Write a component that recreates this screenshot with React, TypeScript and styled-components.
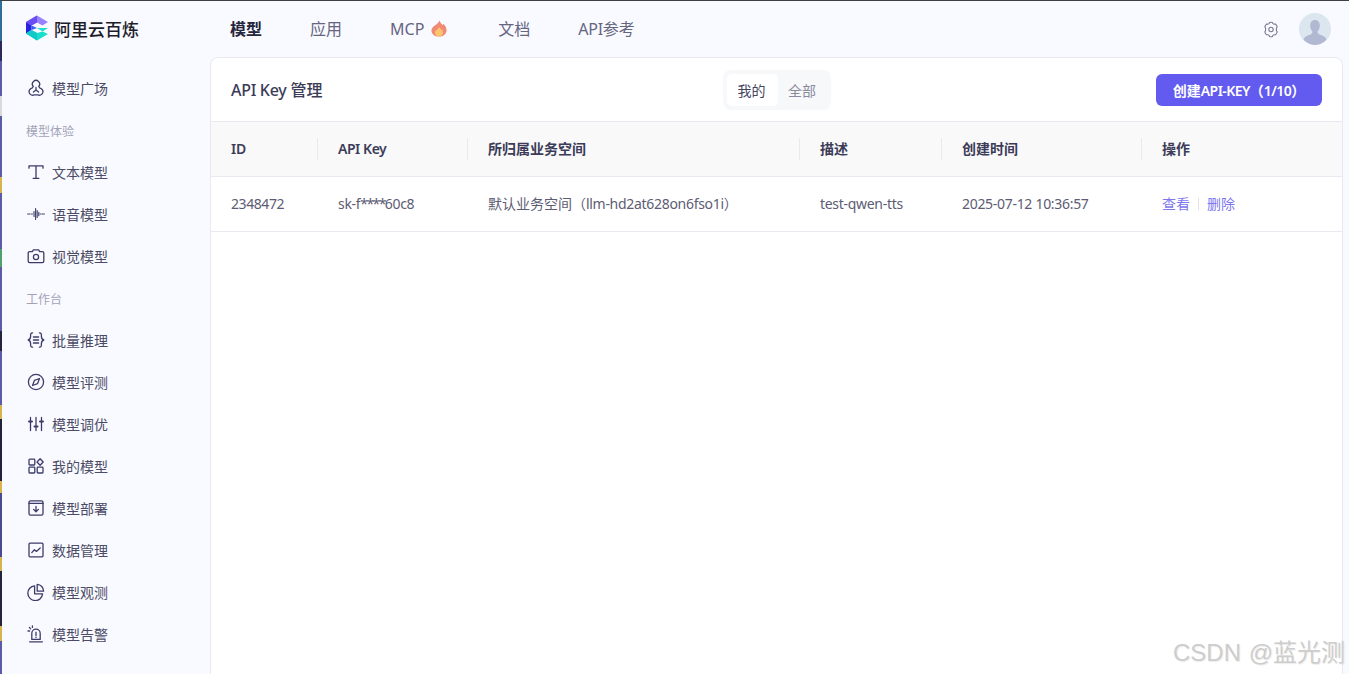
import React from "react";
import styled, { createGlobalStyle } from "styled-components";

const FONT = `"Noto Sans", "Noto Sans CJK SC", sans-serif`;

const Global = createGlobalStyle`
  html, body { margin: 0; padding: 0; height: 100%; overflow: hidden; background: #f9faff; }
  * { box-sizing: border-box; }
  #root { height: 100%; }
`;

const Shell = styled.div`
  position: relative;
  display: flex;
  height: 674px;
  overflow: hidden;
  border-top: 1px solid #3f4043;
  background: #f9faff;
  font-family: ${FONT};
  color: #45455f;
`;

const DesktopSliver = styled.div`
  flex: 0 0 2px;
  background: linear-gradient(
    180deg,
    #2b6f9a 0 40px, #2a2a55 40px 60px, #5b5ca8 60px 95px, #d9d9d9 95px 115px, #5b5ca8 115px 176px,
    #d9b44a 176px 192px, #5b5ca8 192px 248px, #4fa06a 248px 266px, #5b5ca8 266px 330px,
    #24243c 330px 350px, #5b5ca8 350px 404px, #d9b44a 404px 418px, #22223a 418px 480px,
    #d9b44a 480px 492px, #4a4a90 492px 556px, #d9b44a 556px 570px, #24243c 570px 625px, #d9b44a 625px 640px, #5b5ca8 640px
  );
`;

const Sidebar = styled.aside`
  flex: 0 0 208px;
  display: flex;
  flex-direction: column;
`;

const Brand = styled.div`
  height: 56px;
  display: flex;
  align-items: center;
  gap: 5px;
  padding: 0 0 2px 23px;
  font-size: 17px;
  font-weight: 500;
  color: #1d1d2b;
`;

const SideNav = styled.nav`
  display: flex;
  flex-direction: column;
  padding-top: 10px;
`;

const SideLabel = styled.div`
  height: 42px;
  padding: 2px 0 0 24px;
  display: flex;
  align-items: center;
  font-size: 12px;
  color: #a3a3b8;
`;

const SideItem = styled.a`
  height: 42px;
  padding-left: 25px;
  display: flex;
  align-items: center;
  gap: 7px;
  font-size: 14px;
  color: #4b4b66;
  svg {
    flex: none;
    width: 18px;
    height: 18px;
    fill: none;
    stroke: #3c3c68;
    stroke-width: 1.3;
    stroke-linecap: round;
    stroke-linejoin: round;
  }
`;

const Main = styled.div`
  flex: 1;
  min-width: 0;
  display: flex;
  flex-direction: column;
  padding-right: 6px;
`;

const TopBar = styled.header`
  height: 56px;
  flex: none;
  display: flex;
  align-items: center;
  padding: 0 11px 2px 20px;
  gap: 48px;
  margin-right: -6px;
`;

const TopLink = styled.a<{ $active?: boolean }>`
  display: flex;
  align-items: center;
  gap: 7px;
  font-size: 16px;
  font-weight: ${(p) => (p.$active ? 600 : 400)};
  color: ${(p) => (p.$active ? "#26263c" : "#65657f")};
`;

const McpLabel = styled.span`
  padding-top: 2px;
`;

const TopTools = styled.div`
  margin-left: auto;
  display: flex;
  align-items: center;
  gap: 20px;
  padding: 2px 7px 0 0;
`;

const Avatar = styled.div`
  width: 32px;
  height: 32px;
  border-radius: 50%;
  overflow: hidden;
  background: #dbe6ee;
`;

const Card = styled.section`
  flex: 1;
  background: #fff;
  border: 1px solid #e9eaf0;
  border-bottom: none;
  border-radius: 8px 8px 0 0;
`;

const CardHead = styled.div`
  height: 63px;
  position: relative;
  display: flex;
  align-items: center;
  justify-content: space-between;
  padding: 0 20px;
`;

const CardTitle = styled.h1`
  margin: 0 0 1px;
  font-size: 16px;
  font-weight: 500;
  color: #3c3c58;
`;

const Segments = styled.div`
  position: absolute;
  left: 512px;
  top: 12px;
  width: 108px;
  height: 40px;
  padding: 4px;
  display: flex;
  border-radius: 8px;
  background: #f7f8fa;
`;

const Segment = styled.div<{ $on?: boolean }>`
  width: ${(p) => (p.$on ? 51 : 48)}px;
  padding-right: ${(p) => (p.$on ? 2 : 0)}px;
  display: flex;
  align-items: center;
  justify-content: center;
  border-radius: 5px;
  font-size: 14px;
  background: ${(p) => (p.$on ? "#fff" : "transparent")};
  color: ${(p) => (p.$on ? "#45455f" : "#8a8a9c")};
`;

const PrimaryButton = styled.button`
  align-self: flex-start;
  margin-top: 16px;
  width: 166px;
  height: 32px;
  border: none;
  border-radius: 6px;
  background: #635bef;
  color: #fff;
  font-family: ${FONT};
  font-size: 14px;
  font-weight: 600;
  white-space: nowrap;
  padding: 0;
`;

const Latin = styled.span<{ $ls?: number }>`
  letter-spacing: ${(p) => p.$ls ?? -0.3}px;
`;

const Row = styled.div<{ $head?: boolean }>`
  display: grid;
  grid-template-columns: 107px 150px 332px 142px 200px 1fr;
  height: 55px;
  align-items: center;
  border-top: 1px solid #e9eaf0;
  background: ${(p) => (p.$head ? "#f9f9fa" : "#fff")};
  font-size: 14px;
  font-weight: ${(p) => (p.$head ? 600 : 400)};
  color: ${(p) => (p.$head ? "#3c3c58" : "#5c5c74")};
`;

const RowEnd = styled.div`
  border-top: 1px solid #e9eaf0;
`;

const Cell = styled.div`
  padding-left: 20px;
  height: 22px;
  line-height: 22px;
  white-space: nowrap;
`;

const HeadCell = styled(Cell)<{ $first?: boolean }>`
  position: relative;
  &::before {
    content: "";
    display: ${(p) => (p.$first ? "none" : "block")};
    position: absolute;
    left: -1px;
    top: 0;
    width: 1px;
    height: 22px;
    background: #e9eaf0;
  }
`;

const Action = styled.a`
  color: #7d77ee;
`;

const ActionSep = styled.span`
  display: inline-block;
  width: 1px;
  height: 12px;
  margin: 0 8px;
  vertical-align: -1px;
  background: #e2e3ea;
`;

const Watermark = styled.div`
  position: absolute;
  right: 4px;
  bottom: 6px;
  font-family: "Liberation Sans", "Noto Sans CJK SC", sans-serif;
  font-size: 24px;
  line-height: 30px;
  word-spacing: 1px;
  white-space: nowrap;
  color: #cdcdcd;
  text-shadow: 1px 1px 1px rgba(0, 0, 0, 0.08);
  pointer-events: none;
`;

const LogoMark = () => (
  <svg width="24" height="26" viewBox="0 0 24 26" aria-hidden="true">
    <polygon points="1,7 12,0.5 23,7 17.5,10.5 12,7.5 6.5,10.5" fill="#9a82ff" />
    <polygon points="1,7 12,0.5 12,7.5 6.5,10.5" fill="#6c4cf5" />
    <polygon points="1,7 6.5,10.5 6.5,15 1,18.5" fill="#2424e0" />
    <polygon points="6.5,10.5 12,13 6.5,15" fill="#3a5cf0" />
    <polygon points="12,13 23,13 17.5,16.5" fill="#1fe0d0" />
    <polygon points="1,18.5 6.5,15 12,18 17.5,16.5 23,19 12,25.5" fill="#18dfcc" />
    <polygon points="1,18.5 6.5,15 12,18 12,25.5" fill="#12c8c8" />
  </svg>
);

const FlameMark = styled.svg`
  margin-right: 3px;
`;

const Flame = () => (
  <FlameMark width="16" height="17" viewBox="0 0 14 17" preserveAspectRatio="none" aria-hidden="true">
    <path d="M7.5 0.5C8 3 9.5 3.5 10 5.2 10.6 4.8 10.8 4.2 10.8 3.8 12.6 5.6 13.6 7.8 13.6 10.2 13.6 14 10.8 16.6 7 16.6S0.4 14 0.4 10.4C0.4 6.4 6 4.6 7.5 0.5Z" fill="#f08a72" />
    <path d="M7.2 7C7.6 8.8 10.6 9.8 10.6 12.6 10.6 15 9 16.4 7 16.4S3.4 15 3.4 12.8C3.4 10.4 6.4 9.4 7.2 7Z" fill="#fdc46e" />
  </FlameMark>
);

const Gear = () => (
  <svg width="16" height="17" viewBox="0 0 16 17" fill="none" stroke="#7a7a92" strokeWidth="1.1" strokeLinejoin="round" aria-hidden="true">
    <path d="M6.6 1.6 C7.5 1.1 8.5 1.1 9.4 1.6 L9.9 2.6 C10.4 2.9 10.9 3.1 11.4 3.1 L12.6 3.1 C13.4 4 13.9 5 14.2 6 L13.5 7 C13.4 7.7 13.4 8.9 13.5 9.8 L14.2 10.9 C13.9 12 13.4 13 12.6 13.7 L11.4 13.8 C10.9 13.9 10.4 14.1 9.9 14.4 L9.4 15.4 C8.5 15.9 7.5 15.9 6.6 15.4 L6.1 14.4 C5.6 14.1 5.1 13.9 4.6 13.8 L3.4 13.7 C2.6 13 2.1 12 1.8 10.9 L2.5 9.8 C2.6 8.9 2.6 7.7 2.5 7 L1.8 6 C2.1 5 2.6 4 3.4 3.1 L4.6 3.1 C5.1 3.1 5.6 2.9 6.1 2.6 Z" />
    <circle cx="8" cy="8.5" r="2.2" />
  </svg>
);

const Person = () => (
  <svg width="32" height="32" viewBox="0 0 32 32" aria-hidden="true">
    <path d="M16 7C19 7 20.8 9.4 20.8 12.6 20.8 15.4 19.6 17.4 18.6 18.6 18.4 20 19 20.8 20.4 21.4 23.4 22.6 26.6 23.4 27.5 26.5 25 30 20.5 32 16 32 11.5 32 7 30 4.5 26.5 5.4 23.4 8.6 22.6 11.6 21.4 13 20.8 13.6 20 13.4 18.6 12.4 17.4 11.2 15.4 11.2 12.6 11.2 9.4 13 7 16 7Z" fill="#b1b8d2" />
  </svg>
);

const icons: Record<string, React.ReactNode> = {
  square: (
    <>
      <path d="M6.3 7.4A3.6 3.6 0 1 1 11.7 7.4L13 9.1A3.6 3.6 0 1 1 10.6 15.8H7.4A3.6 3.6 0 1 1 5 9.1Z" />
      <path d="M9 8.4V11M9 11L6.4 13M9 11L11.6 13" />
    </>
  ),
  text: <path d="M2 5.2V2.8h14v2.4M9 2.8v12.6M6.2 15.4h5.6" />,
  wave: <path d="M0.6 9h2.4M4.4 9h1M7 6.6v4.8M8.6 3.6v10.8M10.2 5.6v6.8M11.8 7.2v3.6M13.2 9h.8M15.2 9h2.2" strokeWidth="1.1" />,
  camera: (
    <>
      <path d="M2.6 4.6H5.4L6.4 2.8H11.6L12.6 4.6H15.4A1.4 1.4 0 0 1 16.8 6V14.2A1.4 1.4 0 0 1 15.4 15.6H2.6A1.4 1.4 0 0 1 1.2 14.2V6A1.4 1.4 0 0 1 2.6 4.6Z" />
      <circle cx="9" cy="10" r="2.6" />
    </>
  ),
  batch: (
    <path d="M5.6 1.8C3.4 1.8 3.6 3.4 3.6 5.2 3.6 7.2 3.4 8.4 1.2 9 3.4 9.6 3.6 10.8 3.6 12.8 3.6 14.6 3.4 16.2 5.6 16.2M12.4 1.8C14.6 1.8 14.4 3.4 14.4 5.2 14.4 7.2 14.6 8.4 16.8 9 14.6 9.6 14.4 10.8 14.4 12.8 14.4 14.6 14.6 16.2 12.4 16.2M6.4 6h5.2M6.4 9h5.2M6.4 12h5.2" />
  ),
  compass: (
    <>
      <circle cx="9" cy="9" r="7.6" />
      <path d="M12.5 5.5L10.6 10.6 5.5 12.5 7.4 7.4Z" />
    </>
  ),
  tune: (
    <>
      <path d="M3.5 2.5V15.5M9 2.5V15.5M14.5 2.5V15.5" />
      <path d="M2 6.5h3M7.5 11.5h3M13 6.5h3" strokeWidth="2" />
    </>
  ),
  mine: (
    <>
      <rect x="2" y="2.2" width="5.8" height="5.8" rx=".8" />
      <rect x="2" y="10.2" width="5.8" height="5.8" rx=".8" />
      <rect x="10.2" y="10.2" width="5.8" height="5.8" rx=".8" />
      <path d="M13.1 1.8L16.2 5 13.1 8.2 10 5Z" />
    </>
  ),
  deploy: (
    <>
      <rect x="2" y="1.8" width="14" height="14.4" rx="1.6" />
      <path d="M2 4.4H16M9 7.4V12.6M6.6 10.4L9 12.8 11.4 10.4" />
    </>
  ),
  data: (
    <>
      <rect x="2" y="2.2" width="14" height="13.6" rx="1" />
      <path d="M4.8 11.6L7.4 8.8 9.4 10.4 13.2 7" />
    </>
  ),
  pie: (
    <>
      <path d="M7.6 2.8A7.4 7.4 0 1 0 15.6 10.8H7.6Z" />
      <path d="M10.2 1.4A6.8 6.8 0 0 1 16.6 8.2H10.2Z" />
    </>
  ),
  alarm: (
    <>
      <path d="M4.8 14.4V8.4A4.2 4.2 0 0 1 13.2 8.4V14.4ZM2.6 16.8H15.4M9 7.2V10.6M9 12.2V12.4" />
      <path d="M2.4 2.4L3.6 3.8M1 6H2.6M5.4 1V2.4" />
    </>
  ),
};

const Icon = ({ name }: { name: string }) => <svg viewBox="0 0 18 18">{icons[name]}</svg>;

type NavEntry = { label: string; icon?: string };
const nav: NavEntry[] = [
  { label: "模型广场", icon: "square" },
  { label: "模型体验" },
  { label: "文本模型", icon: "text" },
  { label: "语音模型", icon: "wave" },
  { label: "视觉模型", icon: "camera" },
  { label: "工作台" },
  { label: "批量推理", icon: "batch" },
  { label: "模型评测", icon: "compass" },
  { label: "模型调优", icon: "tune" },
  { label: "我的模型", icon: "mine" },
  { label: "模型部署", icon: "deploy" },
  { label: "数据管理", icon: "data" },
  { label: "模型观测", icon: "pie" },
  { label: "模型告警", icon: "alarm" },
];

const heads = [
  <Latin>ID</Latin>,
  <Latin $ls={-0.45}>API Key</Latin>,
  "所归属业务空间",
  "描述",
  "创建时间",
  "操作",
];

export default function App() {
  return (
    <>
      <Global />
      <Shell>
        <DesktopSliver />
        <Sidebar>
          <Brand>
            <LogoMark />
            阿里云百炼
          </Brand>
          <SideNav>
            {nav.map((n) =>
              n.icon ? (
                <SideItem key={n.label}>
                  <Icon name={n.icon} />
                  {n.label}
                </SideItem>
              ) : (
                <SideLabel key={n.label}>{n.label}</SideLabel>
              )
            )}
          </SideNav>
        </Sidebar>
        <Main>
          <TopBar>
            <TopLink $active>模型</TopLink>
            <TopLink>应用</TopLink>
            <TopLink>
              <McpLabel>MCP</McpLabel>
              <Flame />
            </TopLink>
            <TopLink>文档</TopLink>
            <TopLink>
              <span>
                <Latin>API</Latin>参考
              </span>
            </TopLink>
            <TopTools>
              <Gear />
              <Avatar>
                <Person />
              </Avatar>
            </TopTools>
          </TopBar>
          <Card>
            <CardHead>
              <CardTitle>
                <Latin>API Key</Latin> 管理
              </CardTitle>
              <Segments>
                <Segment $on>我的</Segment>
                <Segment>全部</Segment>
              </Segments>
              <PrimaryButton>
                创建<Latin $ls={-0.55}>API-KEY</Latin>（<Latin $ls={-0.55}>1/10</Latin>）
              </PrimaryButton>
            </CardHead>
            <Row $head>
              {heads.map((h, i) => (
                <HeadCell key={i} $first={i === 0}>
                  {h}
                </HeadCell>
              ))}
            </Row>
            <Row>
              <Cell>
                <Latin $ls={-0.43}>2348472</Latin>
              </Cell>
              <Cell>
                <Latin>sk-f</Latin>
                <Latin $ls={-1.6}>****</Latin>
                <Latin>60c8</Latin>
              </Cell>
              <Cell>
                默认业务空间（<Latin>llm-hd2at628on6fso1i</Latin>）
              </Cell>
              <Cell>
                <Latin>test-qwen-tts</Latin>
              </Cell>
              <Cell>
                <Latin>2025-07-12 10:36:57</Latin>
              </Cell>
              <Cell>
                <Action>查看</Action>
                <ActionSep />
                <Action>删除</Action>
              </Cell>
            </Row>
            <RowEnd />
          </Card>
        </Main>
        <Watermark>CSDN @蓝光测</Watermark>
      </Shell>
    </>
  );
}
